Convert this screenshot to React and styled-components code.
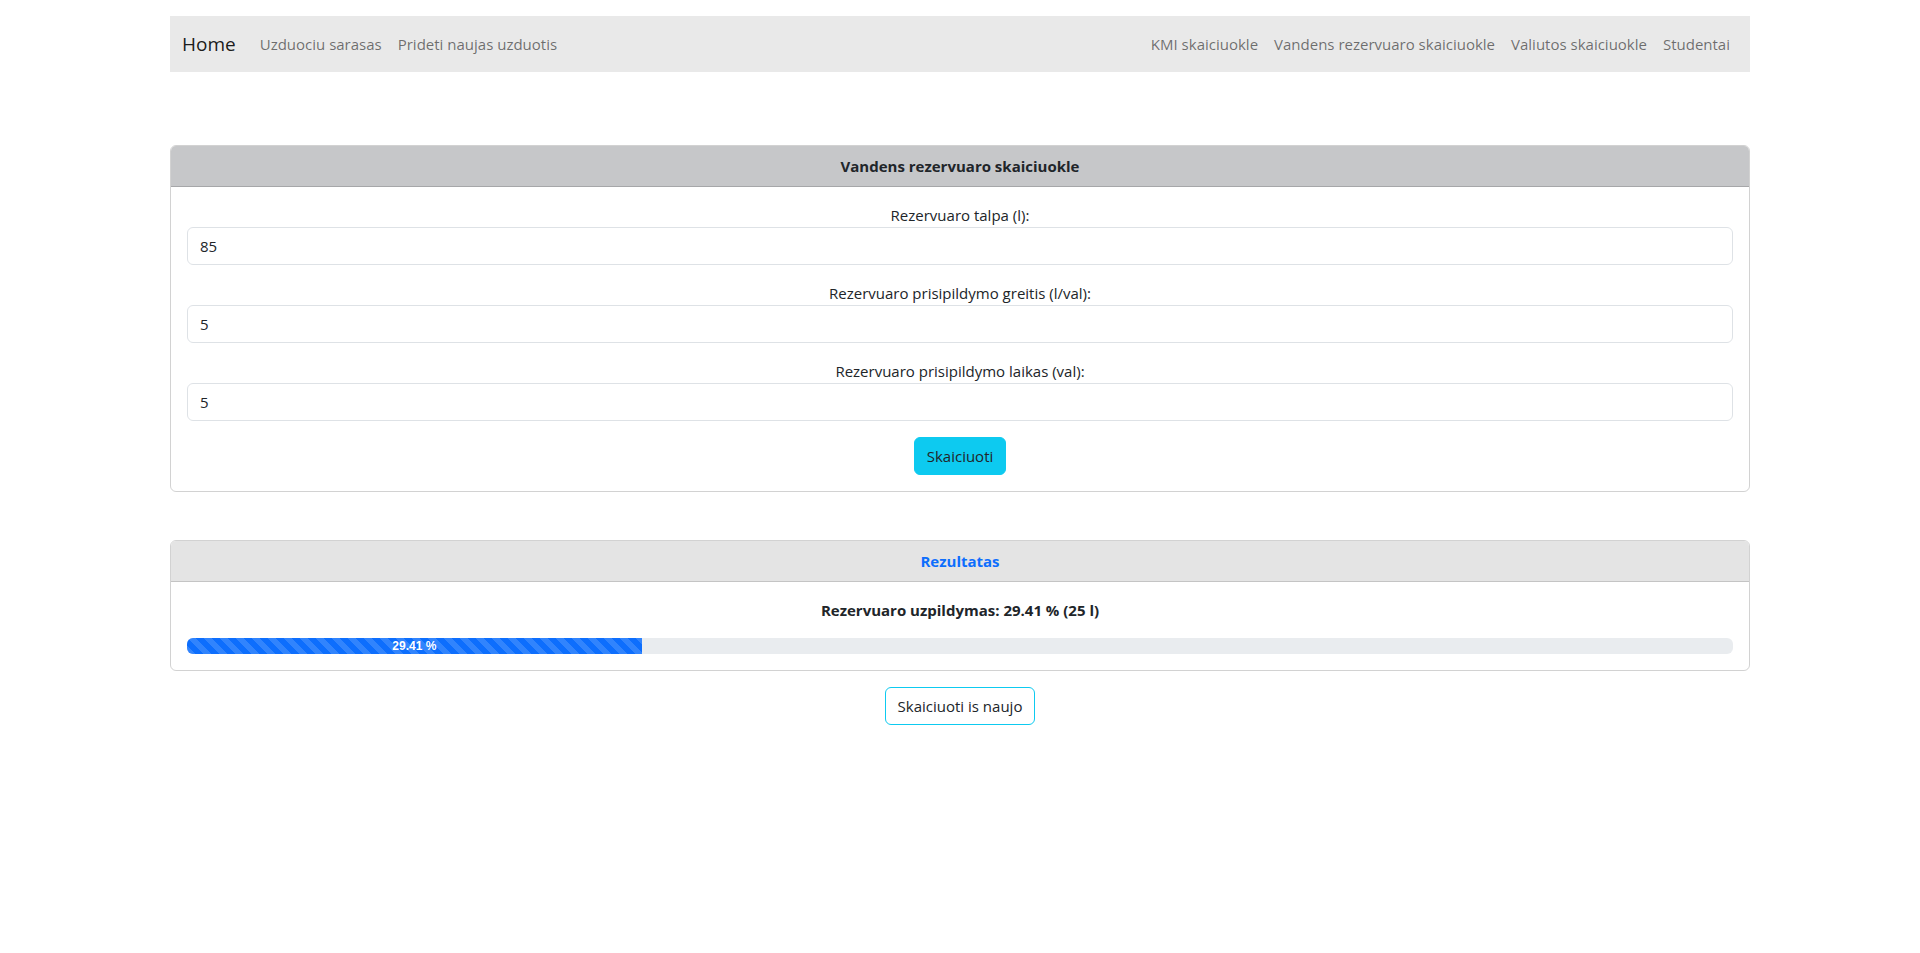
import styled, { createGlobalStyle } from "styled-components";

const GlobalStyle = createGlobalStyle`
  body {
    margin: 0;
    font-family: "Open Sans", "Noto Sans", sans-serif;
    font-size: 15px;
    line-height: 24px;
    color: #212529;
    background: #fff;
  }
  * { box-sizing: border-box; }
`;

const Page = styled.div`
  width: 1580px;
  margin: 0 auto;
  padding-top: 16px;
`;

const Navbar = styled.nav`
  display: flex;
  align-items: center;
  height: 56px;
  padding: 0 12px;
  background: #e9e9e9;
`;

const Brand = styled.a`
  font-size: 19px;
  line-height: 30px;
  color: rgba(0, 0, 0, 0.9);
  margin-right: 16px;
  text-decoration: none;
`;

const NavList = styled.div`
  display: flex;
  margin-left: ${(p) => (p.$end ? "auto" : "0")};
`;

const NavLink = styled.a`
  padding: 8px;
  font-size: 15px;
  color: rgba(0, 0, 0, 0.55);
  text-decoration: none;
`;

const Main = styled.main`
  margin-top: 73px;
`;

const Card = styled.section`
  border: 1px solid rgba(0, 0, 0, 0.175);
  border-radius: 6px;
  overflow: hidden;
  margin-top: ${(p) => p.$gap || "0"};
`;

const CardHeader = styled.div`
  padding: 8px 16px;
  background: ${(p) => p.$bg};
  border-bottom: 1px solid ${(p) => p.$line};
  color: ${(p) => p.$color || "#212529"};
  text-align: center;
  font-weight: 700;
`;

const CardBody = styled.div`
  padding: 16px;
  text-align: center;
`;

const Field = styled.div`
  margin-bottom: 16px;
`;

const Label = styled.label`
  display: block;
`;

const Input = styled.input`
  display: block;
  width: 100%;
  height: 38px;
  padding: 6px 12px;
  border: 1px solid #dee2e6;
  border-radius: 6px;
  font: inherit;
  color: #212529;
`;

const Button = styled.button`
  display: inline-block;
  padding: 6px 12px;
  border: 1px solid #0dcaf0;
  border-radius: 6px;
  background: ${(p) => (p.$outline ? "transparent" : "#0dcaf0")};
  color: #212529;
  font: inherit;
  cursor: pointer;
`;

const ResultText = styled.p`
  margin: 0 0 16px;
  font-weight: 700;
`;

const Progress = styled.div`
  display: flex;
  height: 16px;
  background: #e9ecef;
  border-radius: 6px;
  overflow: hidden;
`;

const ProgressBar = styled.div`
  display: flex;
  align-items: center;
  justify-content: center;
  background-color: #0d6efd;
  background-image: linear-gradient(
    45deg,
    rgba(255, 255, 255, 0.15) 25%,
    transparent 25%,
    transparent 50%,
    rgba(255, 255, 255, 0.15) 50%,
    rgba(255, 255, 255, 0.15) 75%,
    transparent 75%,
    transparent
  );
  background-size: 16px 16px;
  color: #fff;
  font-family: "Liberation Sans", Arial, sans-serif;
  font-size: 12px;
  font-weight: 700;
  white-space: nowrap;
`;

const Center = styled.div`
  display: flex;
  justify-content: center;
  margin-top: 16px;
`;

const capacity = 85;
const rate = 5;
const hours = 5;

export default function App() {
  const filled = Math.min(rate * hours, capacity);
  const percent = ((filled / capacity) * 100).toFixed(2);

  return (
    <Page>
      <GlobalStyle />
      <Navbar>
        <Brand href="#">Home</Brand>
        <NavList>
          <NavLink href="#">Uzduociu sarasas</NavLink>
          <NavLink href="#">Prideti naujas uzduotis</NavLink>
        </NavList>
        <NavList $end>
          <NavLink href="#">KMI skaiciuokle</NavLink>
          <NavLink href="#">Vandens rezervuaro skaiciuokle</NavLink>
          <NavLink href="#">Valiutos skaiciuokle</NavLink>
          <NavLink href="#">Studentai</NavLink>
        </NavList>
      </Navbar>

      <Main>
        <Card>
          <CardHeader $bg="#c6c7c9" $line="#a6a7a9">
            Vandens rezervuaro skaiciuokle
          </CardHeader>
          <CardBody>
            <Field>
              <Label>Rezervuaro talpa (l):</Label>
              <Input type="number" defaultValue={capacity} />
            </Field>
            <Field>
              <Label>Rezervuaro prisipildymo greitis (l/val):</Label>
              <Input type="number" defaultValue={rate} />
            </Field>
            <Field>
              <Label>Rezervuaro prisipildymo laikas (val):</Label>
              <Input type="number" defaultValue={hours} />
            </Field>
            <Button>Skaiciuoti</Button>
          </CardBody>
        </Card>

        <Card $gap="48px">
          <CardHeader $bg="#e4e4e4" $line="#c4c4c4" $color="#0d6efd">
            Rezultatas
          </CardHeader>
          <CardBody>
            <ResultText>
              Rezervuaro uzpildymas: {percent} % ({filled} l)
            </ResultText>
            <Progress>
              <ProgressBar style={{ width: `${percent}%` }}>
                {percent} %
              </ProgressBar>
            </Progress>
          </CardBody>
        </Card>

        <Center>
          <Button $outline>Skaiciuoti is naujo</Button>
        </Center>
      </Main>
    </Page>
  );
}
